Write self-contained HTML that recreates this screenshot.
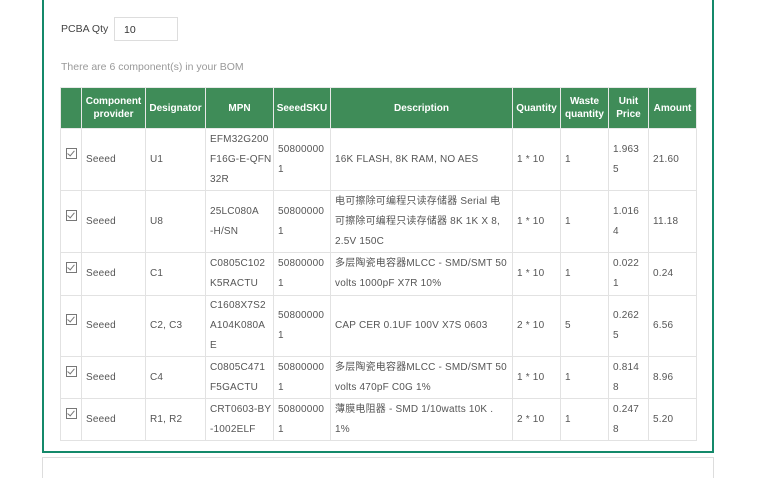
<!DOCTYPE html>
<html><head><meta charset="utf-8"><style>
body{margin:0;width:764px;height:470px;background:#fff;font-family:"Liberation Sans","Noto Sans CJK SC",sans-serif;color:#555;overflow:hidden;position:relative}
.frame{position:absolute;left:42px;top:-4px;width:668px;height:455px;border:2px solid #14896a;border-top:none}
.below{position:absolute;left:42px;top:457px;width:670px;height:20px;border:1px solid #ddd;border-bottom:none}
.lbl{position:absolute;left:61px;top:23px;font-size:10.5px;color:#444}
.inp{position:absolute;left:114px;top:17px;width:64px;height:24px;border:1px solid #ddd;font-size:10.5px;line-height:24px;padding-left:9px;box-sizing:border-box;color:#333}
.info{position:absolute;left:61px;top:61px;font-size:10.5px;color:#999}
table{position:absolute;left:60px;top:87px;width:636px;border-collapse:collapse;table-layout:fixed;font-size:10px}
td,th{border:1px solid #e2e2e2;padding:0 4px;vertical-align:middle;line-height:20px;white-space:nowrap;overflow:hidden}
th{background:#3f8c58;color:#fff;font-weight:bold;line-height:13px;height:40px;text-align:center;border-color:#e8e8e8;padding:0 1px;white-space:normal}
td{color:#555;letter-spacing:0.2px}
.cb{display:inline-block;width:9px;height:9px;border:1px solid #777;position:relative;top:-3px;left:1px}
.cb:after{content:"";position:absolute;left:2px;top:0px;width:3px;height:6px;border-right:1px solid #777;border-bottom:1px solid #777;transform:rotate(40deg)}
</style></head><body>
<div class="frame"></div><div class="below"></div>
<div class="lbl">PCBA Qty</div><div class="inp">10</div>
<div class="info">There are 6 component(s) in your BOM</div>
<table>
<colgroup><col style="width:21px"><col style="width:64px"><col style="width:60px"><col style="width:68px"><col style="width:57px"><col style="width:182px"><col style="width:48px"><col style="width:48px"><col style="width:40px"><col style="width:48px"></colgroup>
<tr><th></th><th>Component provider</th><th>Designator</th><th>MPN</th><th>SeeedSKU</th><th>Description</th><th>Quantity</th><th>Waste quantity</th><th>Unit Price</th><th>Amount</th></tr>
<tr style="height:62px"><td><span class="cb"></span></td><td>Seeed</td><td>U1</td><td>EFM32G200<br>F16G-E-QFN<br>32R</td><td>50800000<br>1</td><td>16K FLASH, 8K RAM, NO AES</td><td>1 * 10</td><td>1</td><td>1.963<br>5</td><td>21.60</td></tr>
<tr style="height:62px"><td><span class="cb"></span></td><td>Seeed</td><td>U8</td><td>25LC080A<br>-H/SN</td><td>50800000<br>1</td><td>电可擦除可编程只读存储器 Serial 电<br>可擦除可编程只读存储器 8K 1K X 8,<br>2.5V 150C</td><td>1 * 10</td><td>1</td><td>1.016<br>4</td><td>11.18</td></tr>
<tr style="height:43px"><td><span class="cb"></span></td><td>Seeed</td><td>C1</td><td>C0805C102<br>K5RACTU</td><td>50800000<br>1</td><td>多层陶瓷电容器MLCC - SMD/SMT 50<br>volts 1000pF X7R 10%</td><td>1 * 10</td><td>1</td><td>0.022<br>1</td><td>0.24</td></tr>
<tr style="height:61px"><td><span class="cb"></span></td><td>Seeed</td><td>C2, C3</td><td>C1608X7S2<br>A104K080A<br>E</td><td>50800000<br>1</td><td>CAP CER 0.1UF 100V X7S 0603</td><td>2 * 10</td><td>5</td><td>0.262<br>5</td><td>6.56</td></tr>
<tr style="height:42px"><td><span class="cb"></span></td><td>Seeed</td><td>C4</td><td>C0805C471<br>F5GACTU</td><td>50800000<br>1</td><td>多层陶瓷电容器MLCC - SMD/SMT 50<br>volts 470pF C0G 1%</td><td>1 * 10</td><td>1</td><td>0.814<br>8</td><td>8.96</td></tr>
<tr style="height:42px"><td><span class="cb"></span></td><td>Seeed</td><td>R1, R2</td><td>CRT0603-BY<br>-1002ELF</td><td>50800000<br>1</td><td>薄膜电阻器 - SMD 1/10watts 10K .<br>1%</td><td>2 * 10</td><td>1</td><td>0.247<br>8</td><td>5.20</td></tr>
</table>
</body></html>
